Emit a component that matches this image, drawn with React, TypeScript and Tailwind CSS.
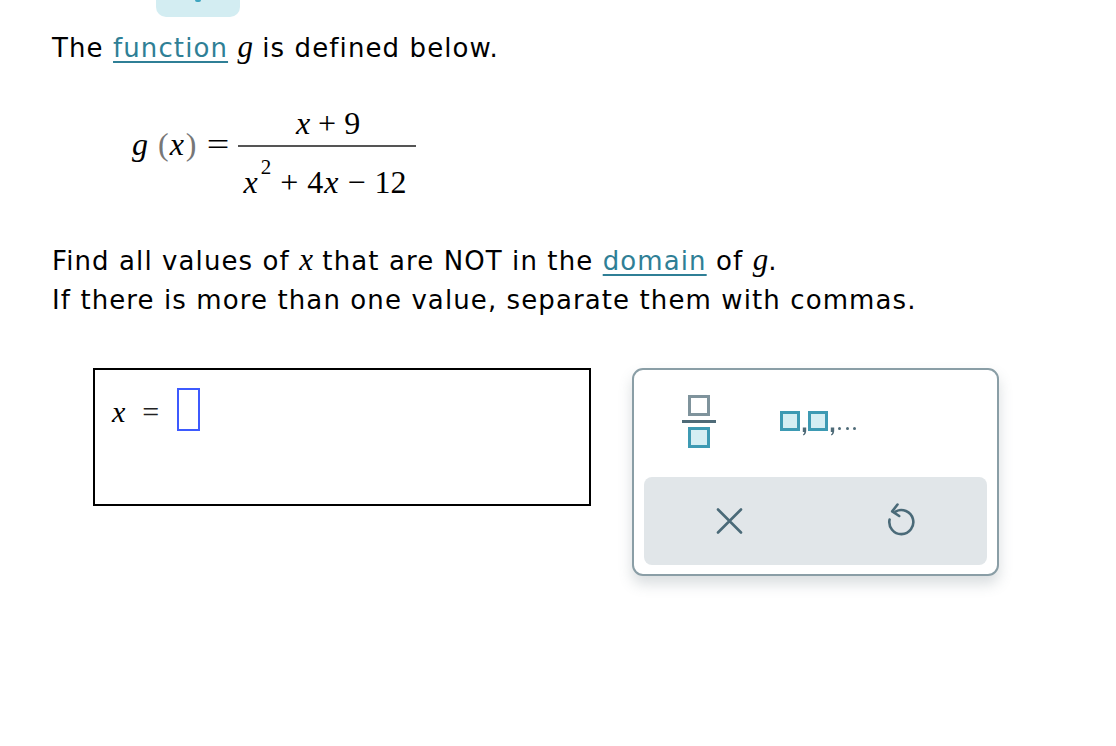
const SANS = "font-['DejaVu_Sans',Verdana,sans-serif]";
const SERIF = "font-['Liberation_Serif','Times_New_Roman',serif]";

function Link({ children }: { children: React.ReactNode }) {
  return (
    <span className="text-[#2f7f96] underline decoration-2 underline-offset-[4px]">{children}</span>
  );
}

// inline math variable inside the sans text
function V({ children }: { children: React.ReactNode }) {
  return <span className={`${SERIF} italic text-[31px] tracking-normal`}>{children}</span>;
}

function Square({ tone }: { tone: "gray" | "teal" }) {
  return tone === "gray" ? (
    <span className="block h-[21px] w-[22px] border-[3px] border-[#7f939c] bg-white" />
  ) : (
    <span className="block h-[21px] w-[22px] border-[3px] border-[#3d9ab3] bg-[#d5eef3]" />
  );
}

function Comma() {
  return (
    <svg width="5" height="9" viewBox="0 0 5 9" className="mb-[-5px] ml-[2px] mr-[1px]" fill="#4f6b78">
      <path d="M0.8 0.5h3.4v3.2c0 2.2-1 3.9-2.6 4.8l-0.7-0.9c0.9-0.7 1.4-1.6 1.4-2.6H0.8z" />
    </svg>
  );
}

export default function App() {
  return (
    <div className={`min-h-[746px] w-[1116px] bg-white text-black ${SANS}`}>
      {/* tab peeking in from the top edge */}
      <div className="ml-[156px] flex h-[17px] w-[84px] justify-center rounded-b-[10px] bg-[#d3edf2]">
        <span className="h-[2px] w-[6px] rounded-b-full bg-[#3ea5c0]" />
      </div>

      <div className="pl-[52px] text-[26px] tracking-[1.1px]">
        <p className="mt-[12px] leading-[36px]">
          The <Link>function</Link> <V>g</V> is defined below.
        </p>

        {/* g(x) = (x+9) / (x^2+4x-12) */}
        <div className={`mt-[37px] ml-[78px] flex items-start ${SERIF} text-[32px] tracking-normal`}>
          <div className="mt-[21px] flex w-[108px] leading-[40px]">
            <span className="ml-[2px] italic">g</span>
            <span className="ml-[10px] text-[#777]">(</span>
            <span className="ml-[1px] italic">x</span>
            <span className="ml-[2px] text-[#777]">)</span>
            <span className="ml-[12px] inline-block scale-x-125">=</span>
          </div>
          <div className="flex w-[178px] flex-col items-center">
            <div className="pb-[2px] pl-[2px] leading-[40px]">
              <span className="italic">x</span>
              <span className="mx-[8px]">+</span>9
            </div>
            <div className="h-[2px] w-[178px] bg-[#555]" />
            <div className="pt-[13px] pr-[4px] leading-[44px]">
              <span className="italic">x</span>
              <span className="relative -top-[19px] ml-[3px] text-[21px] leading-none">2</span>
              <span className="mx-[9px]">+</span>4
              <span className="ml-[1px] italic">x</span>
              <span className="mx-[9px]">−</span>12
            </div>
          </div>
        </div>

        <div className="mt-[36px] leading-[39px]">
          <p>
            Find all values of <V>x</V> that are NOT in the <Link>domain</Link> of <V>g</V>.
          </p>
          <p>If there is more than one value, separate them with commas.</p>
        </div>

        <div className="mt-[48px] flex items-start gap-[41px] pl-[41px] tracking-normal">
          {/* answer box */}
          <div className="h-[138px] w-[498px] border-2 border-black pl-[17px] pt-[18px]">
            <div className={`flex items-center ${SERIF} text-[30px]`}>
              <span className="relative top-[2px] italic leading-[41px]">x</span>
              <span className="relative top-[2px] ml-[17px] leading-[41px] text-[#222]">=</span>
              <span className="ml-[18px] h-[43px] w-[23px] border-2 border-[#3d5afe]" />
            </div>
          </div>

          {/* tool palette */}
          <div className="h-[208px] w-[367px] rounded-[11px] border-2 border-[#8a9ea6] bg-white px-[10px] pt-[25px] shadow-[0_8px_14px_rgba(80,100,110,0.22)]">
            <div className="flex h-[82px] items-start">
              <div className="ml-[38px] flex flex-col items-center gap-[4px]">
                <Square tone="gray" />
                <span className="h-[3px] w-[34px] bg-[#4f6b78]" />
                <Square tone="teal" />
              </div>
              <div className="ml-[64px] mt-[16px] flex items-end">
                <span className="block h-[20px] w-[20px] border-[3px] border-[#3d9ab3] bg-[#d5eef3]" />
                <Comma />
                <span className="block h-[20px] w-[20px] border-[3px] border-[#3d9ab3] bg-[#d5eef3]" />
                <Comma />
                <span className="mb-[1px] ml-[2px] flex gap-[4.5px]">
                  <span className="h-[3px] w-[3px] rounded-full bg-[#4f6b78]" />
                  <span className="h-[3px] w-[3px] rounded-full bg-[#4f6b78]" />
                  <span className="h-[3px] w-[3px] rounded-full bg-[#4f6b78]" />
                </span>
              </div>
            </div>
            <div className="flex h-[88px] items-center rounded-[8px] bg-[#e1e6e9]">
              <div className="flex flex-1 justify-center">
                <svg width="27" height="26" viewBox="0 0 27 26" fill="none" stroke="#4a6a78" strokeWidth="2.6" strokeLinecap="round">
                  <path d="M2 1.5 25 24.5M25 1.5 2 24.5" />
                </svg>
              </div>
              <div className="flex flex-1 justify-center">
                <svg width="28" height="36" viewBox="0 0 28 36" fill="none" stroke="#4a6a78" strokeWidth="2.6" strokeLinecap="round" strokeLinejoin="round" className="mt-[-4px]">
                  <path d="M8.5 10.6A12 12 0 1 1 2.6 18.5" />
                  <path d="M10.5 3.5 5.2 10.4 12.2 15" />
                </svg>
              </div>
            </div>
          </div>
        </div>
      </div>
    </div>
  );
}
